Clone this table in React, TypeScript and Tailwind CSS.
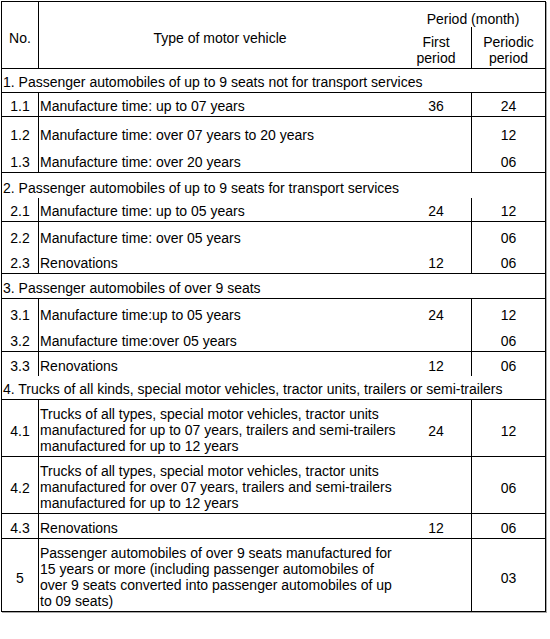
type Row =
  | { kind: 'section'; title: string; h: number; line: boolean }
  | {
      kind: 'item';
      no: string;
      lines: string[];
      first?: string;
      periodic?: string;
      h: number;
      line: boolean;
    };

const rows: Row[] = [
  { kind: 'section', title: '1. Passenger automobiles of up to 9 seats not for transport services', h: 24, line: true },
  { kind: 'item', no: '1.1', lines: ['Manufacture time: up to 07 years'], first: '36', periodic: '24', h: 24, line: true },
  { kind: 'item', no: '1.2', lines: ['Manufacture time: over 07 years to 20 years'], periodic: '12', h: 28, line: false },
  { kind: 'item', no: '1.3', lines: ['Manufacture time: over 20 years'], periodic: '06', h: 28, line: true },
  { kind: 'section', title: '2. Passenger automobiles of up to 9 seats for transport services', h: 25, line: false },
  { kind: 'item', no: '2.1', lines: ['Manufacture time: up to 05 years'], first: '24', periodic: '12', h: 24, line: true },
  { kind: 'item', no: '2.2', lines: ['Manufacture time: over 05 years'], periodic: '06', h: 26, line: false },
  { kind: 'item', no: '2.3', lines: ['Renovations'], first: '12', periodic: '06', h: 26, line: true },
  { kind: 'section', title: '3. Passenger automobiles of over 9 seats', h: 25, line: true },
  { kind: 'item', no: '3.1', lines: ['Manufacture time:up to 05 years'], first: '24', periodic: '12', h: 26, line: false },
  { kind: 'item', no: '3.2', lines: ['Manufacture time:over 05 years'], periodic: '06', h: 27, line: true },
  { kind: 'item', no: '3.3', lines: ['Renovations'], first: '12', periodic: '06', h: 24, line: false },
  {
    kind: 'section',
    title: '4. Trucks of all kinds, special motor vehicles, tractor units, trailers or semi-trailers',
    h: 24,
    line: true,
  },
  {
    kind: 'item',
    no: '4.1',
    lines: [
      'Trucks of all types, special motor vehicles, tractor units',
      'manufactured for up to 07 years, trailers and semi-trailers',
      'manufactured for up to 12 years',
    ],
    first: '24',
    periodic: '12',
    h: 57,
    line: true,
  },
  {
    kind: 'item',
    no: '4.2',
    lines: [
      'Trucks of all types, special motor vehicles, tractor units',
      'manufactured for over 07 years, trailers and semi-trailers',
      'manufactured for up to 12 years',
    ],
    periodic: '06',
    h: 57,
    line: true,
  },
  { kind: 'item', no: '4.3', lines: ['Renovations'], first: '12', periodic: '06', h: 25, line: true },
  {
    kind: 'item',
    no: '5',
    lines: [
      'Passenger automobiles of over 9 seats manufactured for',
      '15 years or more (including passenger automobiles of',
      'over 9 seats converted into passenger automobiles of up',
      'to 09 seats)',
    ],
    periodic: '03',
    h: 73,
    line: true,
  },
];

export default function App() {
  return (
    <div className="min-h-screen bg-white pl-px pt-px font-['Liberation_Sans',Arial,sans-serif] text-[14px] leading-[16px] text-black">
      <table className="w-[545px] table-fixed border-separate border-spacing-0 border-l border-t border-black shadow-[1px_1px_0_#a8a8a8]">
        <colgroup>
          <col className="w-[37px]" />
          <col className="w-[362px]" />
          <col className="w-[71px]" />
          <col className="w-[74px]" />
        </colgroup>
        <tbody>
          {/* Header */}
          <tr className="h-[25px]">
            <td rowSpan={2} className="border-r border-b border-black pt-[6px] text-center align-middle">
              No.
            </td>
            <td rowSpan={2} className="border-b border-black pt-[6px] text-center align-middle">
              Type of motor vehicle
            </td>
            <td colSpan={2} className="border-r border-black text-center align-bottom whitespace-nowrap">
              Period (month)
            </td>
          </tr>
          <tr className="h-[42px]">
            <td className="border-r border-b border-black pb-[2px] text-center align-bottom">
              First
              <br />
              period
            </td>
            <td className="border-r border-b border-black pb-[2px] text-center align-bottom">
              Periodic
              <br />
              period
            </td>
          </tr>

          {rows.map((r, i) => {
            const bb = r.line ? ' border-b' : '';
            if (r.kind === 'section') {
              return (
                <tr key={i} style={{ height: r.h }}>
                  <td
                    colSpan={4}
                    className={'border-r border-black pl-[1px] pb-[2px] align-bottom whitespace-nowrap' + bb}
                  >
                    {r.title}
                  </td>
                </tr>
              );
            }
            const multi = r.lines.length > 1;
            const side = multi ? ' align-middle pt-[6px]' : ' align-bottom pb-[2px]';
            return (
              <tr key={i} style={{ height: r.h }}>
                <td className={'border-r border-black text-center' + side + bb}>{r.no}</td>
                <td className={'border-black pl-[1px] pb-[2px] align-bottom whitespace-nowrap' + bb}>
                  {r.lines.map((l, j) => (
                    <div key={j}>{l}</div>
                  ))}
                </td>
                <td className={'border-r border-black text-center' + side + bb}>{r.first}</td>
                <td className={'border-r border-black text-center' + side + bb}>{r.periodic}</td>
              </tr>
            );
          })}
        </tbody>
      </table>
    </div>
  );
}
